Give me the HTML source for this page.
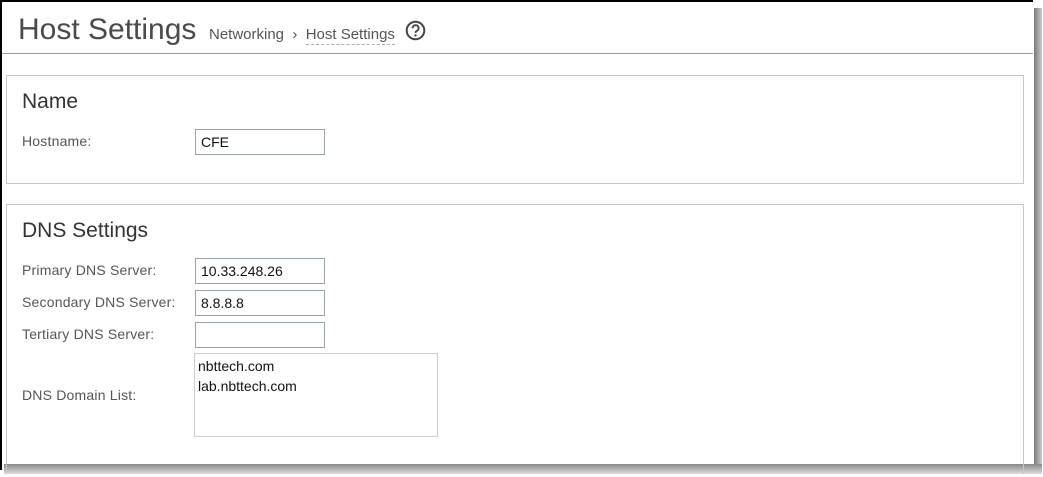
<!DOCTYPE html>
<html><head><meta charset="utf-8"><style>
body{margin:0;width:1043px;height:477px;overflow:hidden;background:#fff;font-family:"Liberation Sans",sans-serif;position:relative}
.frame{position:absolute;left:0;top:0;width:1033px;height:470px;border-left:2px solid #000;border-top:2px solid #000;box-sizing:border-box;background:#fff}
.shadow{position:absolute;left:1034px;top:8px;width:8px;height:462px;background:linear-gradient(90deg,#777,#ccc)}
.bshadow{position:absolute;left:4px;top:464px;width:1038px;height:10px;background:linear-gradient(#888,#ddd)}
.hline{position:absolute;left:2px;top:53px;width:1031px;height:1px;background:#8fa0a0}
.t{position:absolute;white-space:nowrap}
.panel{position:absolute;left:6px;width:1018px;border:1px solid #c3c8c8;box-sizing:border-box}
.lbl{position:absolute;left:22px;font-size:14px;color:#555;letter-spacing:0.2px}
.in{position:absolute;left:195px;width:130px;height:26px;border:1px solid #98a4a4;box-sizing:border-box;font-size:14px;color:#111;padding:4px 0 0 5px}
</style></head><body>
<div class="frame"></div>
<div class="shadow"></div>
<div class="bshadow"></div>
<div class="t" style="left:18px;top:13px;font-size:30px;color:#4a4a4a">Host Settings</div>
<div class="t" style="left:209px;top:26px;font-size:15px;color:#555">Networking &nbsp;›&nbsp; <span style="border-bottom:1px dashed #aaa;padding-bottom:1px">Host Settings</span></div>
<svg style="position:absolute;left:405px;top:20px" width="21" height="21" viewBox="0 0 21 21"><circle cx="10.5" cy="10.5" r="8.8" fill="none" stroke="#444" stroke-width="2"/><path d="M7.6 8.3a3 3 0 1 1 4.2 2.6c-.9.5-1.3 1-1.3 2" fill="none" stroke="#444" stroke-width="1.9"/><circle cx="10.5" cy="15.4" r="1.2" fill="#444"/></svg>
<div class="hline"></div>
<div class="panel" style="top:75px;height:109px"></div>
<div class="t" style="left:22px;top:90px;font-size:21px;color:#333">Name</div>
<div class="lbl" style="top:133px">Hostname:</div>
<div class="in" style="top:129px">CFE</div>
<div class="panel" style="top:204px;height:270px;border-bottom:none"></div>
<div class="t" style="left:22px;top:219px;font-size:21px;color:#333">DNS Settings</div>
<div class="lbl" style="top:262px">Primary DNS Server:</div>
<div class="in" style="top:258px">10.33.248.26</div>
<div class="lbl" style="top:294px">Secondary DNS Server:</div>
<div class="in" style="top:290px">8.8.8.8</div>
<div class="lbl" style="top:326px">Tertiary DNS Server:</div>
<div class="in" style="top:322px"></div>
<div class="lbl" style="top:387px">DNS Domain List:</div>
<div class="in" style="top:353px;left:194px;width:244px;height:84px;border-color:#ccc;padding:2px 0 0 3px;line-height:20px">nbttech.com<br>lab.nbttech.com</div>
</body></html>
